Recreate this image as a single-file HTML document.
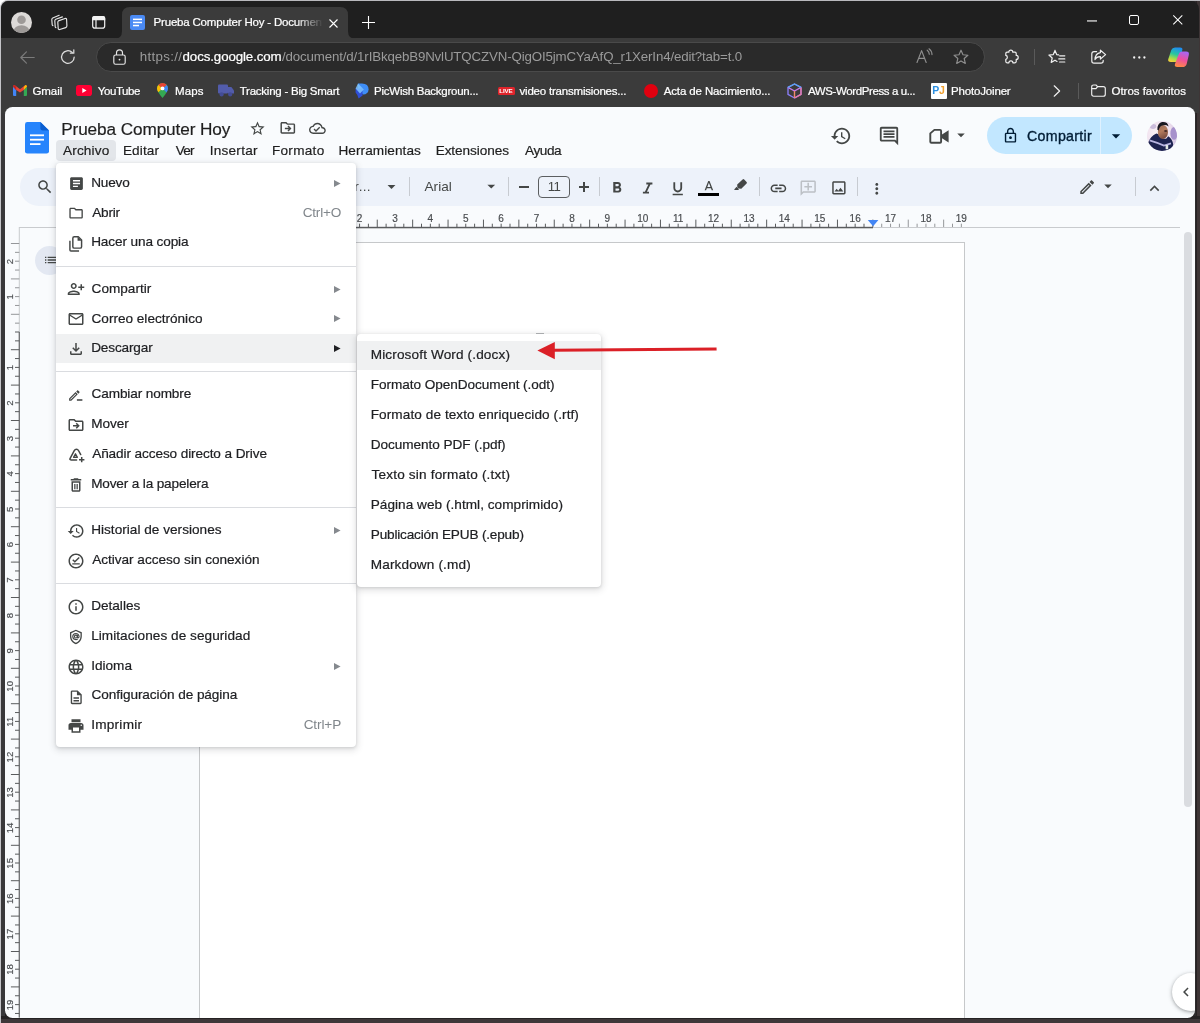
<!DOCTYPE html>
<html lang="es">
<head>
<meta charset="utf-8">
<title>Prueba Computer Hoy - Documentos de Google</title>
<style>
*{box-sizing:border-box;margin:0;padding:0}
html,body{width:1200px;height:1023px;overflow:hidden;background:#fff}
body{font-family:"Liberation Sans",sans-serif;position:relative;color:#1f1f1f}
.abs{position:absolute}
.tx{white-space:nowrap}
.w{-webkit-text-stroke:.22px #fff}
.m{-webkit-text-stroke:.2px #202124}
.g{-webkit-text-stroke:.2px #1f1f1f}
body{will-change:transform}
svg{display:block;overflow:visible}
#winframe{left:0;top:0;width:1200px;height:1023px;background:linear-gradient(90deg,#39383a 0,#39383a 3.6px,#232122 3.6px,#232122 5px,#2e2b2c 5px,#2e2b2c 1195px,#272324 1195px,#272324 1196.3px,#3e3536 1196.3px);border-top-left-radius:8px;border-top:1px solid #b9b9bd;border-left:1px solid #c4c4c8}
#titlebar{left:1px;top:1px;width:1198px;height:38px;background:#1f1f1f;border-radius:8px 8px 0 0}
#navrow{left:1px;top:38px;width:1198px;height:75px;background:#3b3b3b}
#urlpill{left:96px;top:42.1px;width:888.5px;height:29.6px;border-radius:14.8px;background:#2a2a2a;border:1px solid #4a4a4a}
#app{left:4.8px;top:107.4px;width:1190.5px;height:910.4px;background:#f9fbfd;border-radius:7.5px}
#botframe{left:1px;top:1016px;width:1199px;height:7px;background:linear-gradient(180deg,#252223 0,#252223 3px,#3e3739 3px)}
.popup{background:#fff;border-radius:4px;box-shadow:0 2px 6px 2px rgba(60,64,67,.13),0 1px 3px 0 rgba(60,64,67,.17)}
</style>
</head>
<body>

<!-- ===== browser chrome ===== -->
<div class="abs" id="winframe"></div>
<div class="abs" id="botframe"></div>
<div class="abs" id="titlebar"></div>
<div class="abs" id="navrow"></div>
<svg class="abs" style="left:114px;top:7px" width="244" height="32" viewBox="0 0 244 32"><path d="M0 32 Q8 32 8 24 V8 Q8 0 16 0 H226 Q234 0 234 8 V24 Q234 32 242 32 Z" fill="#3b3b3b"/></svg>
<svg class="abs" style="left:10.9px;top:11.7px" width="21" height="21" viewBox="0 0 21 21"><defs><clipPath id="pc"><circle cx="10.5" cy="10.5" r="10.5"/></clipPath></defs><circle cx="10.5" cy="10.5" r="10.5" fill="#dddad8"/><g clip-path="url(#pc)" fill="#9d9997"><circle cx="10.5" cy="7.8" r="4.3"/><ellipse cx="10.5" cy="19.6" rx="8" ry="6.4"/></g></svg>
<svg class="abs" style="left:50px;top:14px" width="18" height="17" viewBox="0 0 18 17" fill="none" stroke="#e6e6e6" stroke-width="1.15" stroke-linejoin="round" stroke-linecap="round"><path d="M8.4 6.9 L15 4.5 Q16.5 4.1 16.6 5.6 L16.9 11.8 Q16.9 13.2 15.7 13.6 L9.7 15.5 Q8.3 15.8 8.2 14.4 L7.8 8.4 Q7.8 7.2 8.4 6.9Z"/><path d="M12.4 2.9 L5.8 5.3 Q4.7 5.8 4.8 7 L5.2 12.6 Q5.3 13.5 6 13.7"/><path d="M9.2 1.3 L2.7 4 Q1.7 4.5 1.8 5.7 L2.2 10.6 Q2.3 11.5 3 11.7"/></svg>
<svg class="abs" style="left:91.6px;top:16px" width="13.4" height="13" viewBox="0 0 13.4 13" fill="none" stroke="#f2f2f2" stroke-width="1.2"><rect x="0.7" y="0.7" width="12" height="11.4" rx="2.2"/><path d="M0.8 2 Q0.8 0.7 2.4 0.7 H11 Q12.6 0.7 12.6 2 V3.6 H0.8Z" fill="#f2f2f2"/><path d="M4 3.6 V12"/></svg>
<svg class="abs" style="left:130px;top:15px" width="15" height="15" viewBox="0 0 15 15"><rect width="15" height="15" rx="2" fill="#4a8af4"/><rect x="3" y="3.6" width="9" height="1.5" fill="#fff"/><rect x="3" y="6.7" width="9" height="1.5" fill="#fff"/><rect x="3" y="9.8" width="6" height="1.5" fill="#fff"/></svg>
<div class="abs" style="left:0;top:0;width:322px;height:38px;overflow:hidden"><span class="abs tx w" style="left:153.60px;top:12.30px;font-size:11.5px;line-height:20px;color:#ffffff;letter-spacing:-0.195px;">Prueba Computer Hoy - Documentos de Google</span></div>
<div class="abs" style="left:296px;top:10px;width:27px;height:26px;background:linear-gradient(90deg,rgba(59,59,59,0),#3b3b3b)"></div>
<svg class="abs" style="left:329px;top:18.5px" width="9" height="9" viewBox="0 0 9 9" stroke="#fff" stroke-width="1.1" fill="none"><path d="M0.5 0.5 L8.5 8.5 M8.5 0.5 L0.5 8.5"/></svg>
<svg class="abs" style="left:361.5px;top:15.5px" width="13" height="13" viewBox="0 0 13 13" stroke="#fff" stroke-width="1.1" fill="none"><path d="M6.5 0 V13 M0 6.5 H13"/></svg>
<svg class="abs" style="left:1087px;top:20px" width="10" height="2" viewBox="0 0 10 2"><rect width="10" height="1.1" y="0.4" fill="#fff"/></svg>
<svg class="abs" style="left:1129px;top:15px" width="10" height="10" viewBox="0 0 10 10" fill="none" stroke="#fff" stroke-width="1"><rect x="0.5" y="0.5" width="9" height="9" rx="1.5"/></svg>
<svg class="abs" style="left:1172.9px;top:14.6px" width="9.6" height="9.6" viewBox="0 0 10 10" stroke="#fff" stroke-width="1.05" fill="none"><path d="M0.3 0.3 L9.7 9.7 M9.7 0.3 L0.3 9.7"/></svg>
<svg class="abs" style="left:19.5px;top:50.5px" width="15" height="13" viewBox="0 0 15 13" stroke="#7b7b7b" stroke-width="1.2" fill="none" stroke-linecap="round" stroke-linejoin="round"><path d="M14.2 6.5 H1 M6.4 0.9 L0.8 6.5 L6.4 12.1"/></svg>
<svg class="abs" style="left:60px;top:49px" width="16" height="16" viewBox="0 0 16 16" stroke="#dcdcdc" stroke-width="1.25" fill="none" stroke-linecap="round" stroke-linejoin="round"><path d="M14.2 8 A6.3 6.3 0 1 1 12.3 3.5"/><path d="M13.8 0.8 V4.2 H10.4"/></svg>
<div class="abs" id="urlpill"></div>
<svg class="abs" style="left:112.5px;top:49px" width="13" height="16" viewBox="0 0 13 16" fill="none" stroke="#e6e6e6" stroke-width="1.15"><rect x="0.8" y="6" width="11.4" height="9.2" rx="1.8"/><path d="M3.5 6 V3.8 A3 3 0 0 1 9.5 3.8 V6"/><circle cx="6.5" cy="10.6" r="0.9" fill="#e6e6e6" stroke="none"/></svg>
<span class="abs tx" style="left:139.67px;top:47.30px;font-size:13.3px;line-height:20px;color:#9b9b9b;letter-spacing:0.338px;">https://</span>
<span class="abs tx w" style="left:182.58px;top:47.30px;font-size:13.3px;line-height:20px;color:#ffffff;letter-spacing:-0.103px;">docs.google.com</span>
<span class="abs tx" style="left:282.00px;top:47.30px;font-size:13.3px;line-height:20px;color:#9b9b9b;letter-spacing:-0.146px;">/document/d/1rIBkqebB9NvlUTQCZVN-QigOI5jmCYaAfQ_r1XerIn4/edit?tab=t.0</span>
<svg class="abs" style="left:916px;top:48px" width="18" height="16" viewBox="0 0 18 16" fill="none" stroke="#8f8f8f" stroke-width="1.15" stroke-linecap="round" stroke-linejoin="round"><path d="M1 14.5 L5.6 2.6 L10.2 14.5 M2.7 10.3 H8.5"/><path d="M11.2 2.2 Q13.2 3.6 13.3 6.2"/><path d="M13 0.8 Q15.9 3 16 6.6"/></svg>
<svg class="abs" style="left:953px;top:49px" width="16" height="16" viewBox="0 0 16 16" fill="none" stroke="#8f8f8f" stroke-width="1.15" stroke-linejoin="round"><path d="M8 1.2 L10 5.7 L14.9 6.2 L11.2 9.5 L12.3 14.4 L8 11.9 L3.7 14.4 L4.8 9.5 L1.1 6.2 L6 5.7Z"/></svg>
<svg class="abs" style="left:1003px;top:49px" width="16" height="16" viewBox="0 0 16 16" fill="none" stroke="#f0f0f0" stroke-width="1.2" stroke-linejoin="round"><path d="M5.8 3.2 A2 2 0 0 1 9.8 3.2 H12 Q13.2 3.2 13.2 4.4 V6.4 A2 2 0 0 1 13.2 10.4 V12.6 Q13.2 13.8 12 13.8 H9.9 A2 2 0 0 0 5.9 13.8 H4 Q2.8 13.8 2.8 12.6 V10.3 A2 2 0 0 0 2.8 6.4 V4.4 Q2.8 3.2 4 3.2Z"/></svg>
<div class="abs" style="left:1033.5px;top:49px;width:1px;height:16px;background:#5a5a5a"></div>
<svg class="abs" style="left:1048px;top:49px" width="18" height="16" viewBox="0 0 18 16" fill="none" stroke="#f0f0f0" stroke-width="1.2" stroke-linejoin="round" stroke-linecap="round"><path d="M7 1.4 L8.7 5.6 L10.6 5.8 M7 1.4 L5.3 5.6 L0.9 6 L4.2 9 L3.2 13.5 L7 11.2 L9 12.4"/><path d="M11.6 6.8 H16.8 M10.8 9.9 H16.8 M11.6 13 H16.8"/></svg>
<svg class="abs" style="left:1090px;top:49px" width="17" height="16" viewBox="0 0 17 16" fill="none" stroke="#f0f0f0" stroke-width="1.2" stroke-linejoin="round" stroke-linecap="round"><path d="M6.6 2.6 H4 Q1.8 2.6 1.8 4.8 V12 Q1.8 14.2 4 14.2 H11 Q13.2 14.2 13.2 12 V11.4"/><path d="M10.4 1.2 L15.6 5.6 L10.4 10 V7.6 Q6.6 7.4 5 10.6 Q5.2 4.4 10.4 3.6Z"/></svg>
<svg class="abs" style="left:1132px;top:55.5px" width="15" height="3" viewBox="0 0 15 3" fill="#f4f4f4"><circle cx="2.2" cy="1.5" r="1.15"/><circle cx="7.3" cy="1.5" r="1.15"/><circle cx="12.4" cy="1.5" r="1.15"/></svg>
<svg class="abs" style="left:1166px;top:46px" width="24" height="22" viewBox="1166 46 24 22"><defs><linearGradient id="cp1" x1="0.6" y1="0" x2="0.3" y2="1"><stop offset="0" stop-color="#1f8df2"/><stop offset=".45" stop-color="#27c6a0"/><stop offset=".75" stop-color="#9edb4c"/><stop offset="1" stop-color="#f6d13a"/></linearGradient><linearGradient id="cp2" x1="0.6" y1="0" x2="0.3" y2="1"><stop offset="0" stop-color="#a866f2"/><stop offset=".5" stop-color="#ee4f9c"/><stop offset="1" stop-color="#ff8a42"/></linearGradient></defs><path d="M1171.3 50 Q1172.2 47.5 1175 47.5 H1180 Q1183.2 47.5 1182.2 50.6 L1179.6 59.2 Q1178.6 62 1175.6 62 H1171 Q1167.4 62 1168.3 59Z" fill="url(#cp1)"/><path d="M1178.4 55 Q1179.4 51.6 1182.4 51.6 H1186 Q1189.6 51.6 1188.8 55 L1186.6 64.2 Q1185.6 67 1182.6 67 H1177.4 Q1174 67 1175 64Z" fill="url(#cp2)"/></svg>
<svg class="abs" style="left:13px;top:85px" width="14" height="11" viewBox="0 0 14 11"><path d="M0 1.6 V10 Q0 11 1 11 H3.2 V5 Z" fill="#4285f4"/><path d="M14 1.6 V10 Q14 11 13 11 H10.8 V5 Z" fill="#34a853"/><path d="M0 1.6 Q0 0 1.6 0 L7 4.2 L12.4 0 Q14 0 14 1.6 L10.8 5 L7 7.6 L3.2 5 Z" fill="#ea4335"/><path d="M10.8 2 L12.4 0 Q14 0 14 1.6 L10.8 5Z" fill="#fbbc04"/><path d="M3.2 2 L1.6 0 Q0 0 0 1.6 L3.2 5Z" fill="#c5221f"/></svg>
<span class="abs tx w" style="left:32.45px;top:80.60px;font-size:11.5px;line-height:20px;color:#ffffff;letter-spacing:-0.056px;">Gmail</span>
<svg class="abs" style="left:76px;top:85px" width="16" height="11" viewBox="0 0 16 11"><rect width="16" height="11" rx="2.8" fill="#ff0033"/><path d="M6.3 3 L10.6 5.5 L6.3 8Z" fill="#fff"/></svg>
<span class="abs tx w" style="left:97.75px;top:80.60px;font-size:11.5px;line-height:20px;color:#ffffff;letter-spacing:-0.408px;">YouTube</span>
<svg class="abs" style="left:157px;top:83px" width="11" height="15" viewBox="0 0 11 15"><path d="M5.5 0 A5.5 5.5 0 0 1 11 5.5 Q11 8.6 5.5 15 Q0 8.6 0 5.5 A5.5 5.5 0 0 1 5.5 0Z" fill="#34a853"/><path d="M5.5 0 A5.5 5.5 0 0 1 9.8 2 L5.5 5.5 L1.2 2 A5.5 5.5 0 0 1 5.5 0Z" fill="#ea4335"/><path d="M9.8 2 A5.5 5.5 0 0 1 11 5.5 Q11 7 9.6 9.4 L5.5 5.5Z" fill="#4285f4"/><path d="M1.2 2 L5.5 5.5 L1.3 9.2 Q0 7 0 5.5 A5.5 5.5 0 0 1 1.2 2Z" fill="#fbbc04"/><circle cx="5.5" cy="5.4" r="1.9" fill="#fff"/></svg>
<span class="abs tx w" style="left:175.10px;top:80.60px;font-size:11.5px;line-height:20px;color:#ffffff;letter-spacing:0.060px;">Maps</span>
<svg class="abs" style="left:218px;top:84px" width="16" height="13" viewBox="0 0 16 13" fill="#525cab"><rect x="0" y="0.5" width="10" height="9" rx="1"/><path d="M10 3 H13.4 L16 6.4 V9.5 H10Z"/><circle cx="3.6" cy="10.4" r="2.1" fill="#434c96"/><circle cx="12.2" cy="10.4" r="2.1" fill="#434c96"/></svg>
<span class="abs tx w" style="left:239.75px;top:80.60px;font-size:11.5px;line-height:20px;color:#ffffff;letter-spacing:-0.241px;">Tracking - Big Smart</span>
<svg class="abs" style="left:355px;top:82.5px" width="14" height="16" viewBox="0 0 14 16"><path d="M3 0.5 H7 Q13.6 0.8 13.6 6.4 Q13.4 11 8 11.6 L3 6.2Z" fill="#3f8ef7"/><path d="M0.6 5.6 L7.4 5.6 L7.6 12.6 L3.6 15.6 Q2.4 11.4 0.6 9.6Z" fill="#2f4fd8"/><path d="M3 0.5 L8.8 6.6 L5 10.4 L0.6 5.6Z" fill="#7fc4ff" opacity=".85"/></svg>
<span class="abs tx w" style="left:374.10px;top:80.60px;font-size:11.5px;line-height:20px;color:#ffffff;letter-spacing:-0.255px;">PicWish Backgroun...</span>
<div class="abs" style="left:498px;top:86.5px;width:16.5px;height:8.5px;border-radius:1.5px;background:#e0242b"></div>
<span class="abs tx" style="left:499.3px;top:86.6px;font-size:6.2px;line-height:8px;color:#fff;font-weight:700;letter-spacing:-.1px">LIVE</span>
<span class="abs tx w" style="left:519.50px;top:80.60px;font-size:11.5px;line-height:20px;color:#ffffff;letter-spacing:-0.199px;">video transmisiones...</span>
<div class="abs" style="left:643.5px;top:83.5px;width:14px;height:14px;border-radius:7px;background:#e1000f"></div>
<span class="abs tx w" style="left:663.70px;top:80.60px;font-size:11.5px;line-height:20px;color:#ffffff;letter-spacing:-0.123px;">Acta de Nacimiento...</span>
<svg class="abs" style="left:786.5px;top:82.5px" width="15" height="16" viewBox="0 0 15 16" fill="none" stroke-width="1.4" stroke-linejoin="round"><path d="M7.5 1 L14 4.4 V11.4 L7.5 15 L1 11.4 V4.4Z" stroke="#8a7df5"/><path d="M1 4.4 L7.5 8 L14 4.4" stroke="#c77bea"/><path d="M7.5 8 V15" stroke="#f08a6a"/><path d="M14 4.4 V11.4 L7.5 15" stroke="#ec7aa8"/><path d="M1 4.4 L7.5 1 L14 4.4" stroke="#5aa5f5"/></svg>
<span class="abs tx w" style="left:808.00px;top:80.60px;font-size:11.5px;line-height:20px;color:#ffffff;letter-spacing:-0.394px;">AWS-WordPress a u...</span>
<div class="abs" style="left:931px;top:82.5px;width:16px;height:16px;background:#fff;border-radius:1px"></div>
<span class="abs tx" style="left:932.3px;top:84.3px;font-size:10.5px;line-height:12px;font-weight:700;color:#2b8fe0;letter-spacing:-.3px">P<span style="color:#f0a030">J</span></span>
<span class="abs tx w" style="left:951.10px;top:80.60px;font-size:11.5px;line-height:20px;color:#ffffff;letter-spacing:-0.179px;">PhotoJoiner</span>
<svg class="abs" style="left:1052.5px;top:84.5px" width="8" height="12" viewBox="0 0 8 12" fill="none" stroke="#f0f0f0" stroke-width="1.2" stroke-linecap="round" stroke-linejoin="round"><path d="M1.2 0.8 L6.6 6 L1.2 11.2"/></svg>
<div class="abs" style="left:1077.5px;top:83px;width:1px;height:16px;background:#5a5a5a"></div>
<svg class="abs" style="left:1091px;top:84px" width="15" height="13" viewBox="0 0 15 13" fill="none" stroke="#f0f0f0" stroke-width="1.15" stroke-linejoin="round"><path d="M0.7 3 Q0.7 1 2.7 1 H5 L6.6 2.6 H12.3 Q14.3 2.6 14.3 4.6 V10.2 Q14.3 12.2 12.3 12.2 H2.7 Q0.7 12.2 0.7 10.2Z"/><path d="M0.7 4.6 H5 L6.6 2.6"/></svg>
<span class="abs tx w" style="left:1111.50px;top:80.60px;font-size:11.5px;line-height:20px;color:#ffffff;letter-spacing:-0.027px;">Otros favoritos</span>
<!-- ===== docs app ===== -->
<div class="abs" id="app"></div>
<svg class="abs" style="left:24.5px;top:122.4px" width="24" height="31.6" viewBox="0 0 24 31.6"><path d="M2.4 0 H15.4 L24 8.6 V29.2 Q24 31.6 21.6 31.6 H2.4 Q0 31.6 0 29.2 V2.4 Q0 0 2.4 0Z" fill="#2684fc"/><path d="M15.4 0 L24 8.6 H17.8 Q15.4 8.6 15.4 6.2Z" fill="#0b5ed0"/><rect x="5" y="12.4" width="14" height="1.8" fill="#fff"/><rect x="5" y="16.8" width="14" height="1.8" fill="#fff"/><rect x="5" y="21.2" width="10.5" height="1.8" fill="#fff"/></svg>
<span class="abs tx g" style="left:61.16px;top:116.70px;font-size:17.2px;line-height:24px;color:#1f1f1f;letter-spacing:-0.099px;">Prueba Computer Hoy</span>
<svg class="abs" style="left:248.70px;top:119.60px;" width="17" height="17" viewBox="0 0 24 24" fill="#444746"><path d="M22 9.24l-7.19-.62L12 2 9.19 8.63 2 9.24l5.46 4.73L5.82 21 12 17.27 18.18 21l-1.63-7.03L22 9.24zM12 15.4l-3.76 2.27 1-4.28-3.32-2.88 4.38-.38L12 6.1l1.71 4.04 4.38.38-3.32 2.88 1 4.28L12 15.4z" /></svg>
<svg class="abs" style="left:278.70px;top:119.40px;" width="17.6" height="17.6" viewBox="0 0 24 24" fill="#444746"><path d="M20 6h-8l-2-2H4c-1.1 0-2 .9-2 2v12c0 1.1.9 2 2 2h16c1.1 0 2-.9 2-2V8c0-1.1-.9-2-2-2zm0 12H4V6h5.17l2 2H20v10z" /><path d="M8 12h5.2l-1.6-1.6L13 9l4 4-4 4-1.4-1.4 1.6-1.6H8z" /></svg>
<svg class="abs" style="left:309.00px;top:120.00px;" width="16.8" height="16.8" viewBox="0 0 24 24" fill="#444746"><path d="M19.35 10.04C18.67 6.59 15.64 4 12 4 9.11 4 6.6 5.64 5.35 8.04 2.34 8.36 0 10.91 0 14c0 3.31 2.69 6 6 6h13c2.76 0 5-2.24 5-5 0-2.64-2.05-4.78-4.65-4.96zM19 18H6c-2.21 0-4-1.79-4-4 0-2.05 1.53-3.76 3.56-3.97l1.07-.11.5-.95C8.08 7.14 9.94 6 12 6c2.62 0 4.88 1.86 5.39 4.43l.3 1.5 1.53.11c1.56.1 2.78 1.41 2.78 2.96 0 1.65-1.35 3-3 3zm-9-3.82l-2.09-2.09L6.5 13.5 10 17l6.01-6.01-1.41-1.41z" /></svg>
<div class="abs" style="left:55.5px;top:139.7px;width:60px;height:21.8px;border-radius:4px;background:#e3e6ea"></div>
<span class="abs tx g" style="left:63.00px;top:141.40px;font-size:13.6px;line-height:20px;color:#1f1f1f;letter-spacing:0.150px;">Archivo</span>
<span class="abs tx g" style="left:122.94px;top:141.40px;font-size:13.6px;line-height:20px;color:#1f1f1f;letter-spacing:0.120px;">Editar</span>
<span class="abs tx g" style="left:175.70px;top:141.40px;font-size:13.6px;line-height:20px;color:#1f1f1f;letter-spacing:-0.773px;">Ver</span>
<span class="abs tx g" style="left:209.64px;top:141.40px;font-size:13.6px;line-height:20px;color:#1f1f1f;letter-spacing:0.260px;">Insertar</span>
<span class="abs tx g" style="left:271.94px;top:141.40px;font-size:13.6px;line-height:20px;color:#1f1f1f;letter-spacing:0.280px;">Formato</span>
<span class="abs tx g" style="left:338.44px;top:141.40px;font-size:13.6px;line-height:20px;color:#1f1f1f;letter-spacing:0.078px;">Herramientas</span>
<span class="abs tx g" style="left:435.64px;top:141.40px;font-size:13.6px;line-height:20px;color:#1f1f1f;letter-spacing:-0.060px;">Extensiones</span>
<span class="abs tx g" style="left:525.00px;top:141.40px;font-size:13.6px;line-height:20px;color:#1f1f1f;letter-spacing:-0.426px;">Ayuda</span>
<svg class="abs" style="left:830.30px;top:124.90px;" width="22" height="22" viewBox="0 0 24 24" fill="#444746"><path d="M13 3c-4.97 0-9 4.03-9 9H1l3.89 3.89.07.14L9 12H6c0-3.87 3.13-7 7-7s7 3.13 7 7-3.13 7-7 7c-1.93 0-3.68-.79-4.94-2.06l-1.42 1.42C8.27 19.99 10.51 21 13 21c4.97 0 9-4.03 9-9s-4.03-9-9-9zm-1 5v5l4.28 2.54.72-1.21-3.5-2.08V8H12z" /></svg>
<svg class="abs" style="left:877.50px;top:125.10px;" width="22" height="22" viewBox="0 0 24 24" fill="#444746"><path d="M21.99 4c0-1.1-.89-2-1.99-2H4c-1.1 0-2 .9-2 2v12c0 1.1.9 2 2 2h14l4 4-.01-18zM20 4v13.170000000000002L18.83 16H4V4h16zM6 12h12v2H6zm0-3h12v2H6zm0-3h12v2H6z" /></svg>
<svg class="abs" style="left:927px;top:126px" width="24" height="20" viewBox="927 126 24 20"><path d="M930.3 133.4 L934.4 129.9 H940 Q941.1 129.9 941.1 131 V141.7 Q941.1 142.8 940 142.8 H931.4 Q930.3 142.8 930.3 141.7Z" fill="none" stroke="#444746" stroke-width="1.9" stroke-linejoin="round"/><path d="M942 134.6 L948.6 130.2 V142.6 L942 138.2Z" fill="#444746"/></svg>
<svg class="abs" style="left:952.30px;top:126.30px;" width="18" height="18" viewBox="0 0 24 24" fill="#444746"><path d="M7 10l5 5 5-5z" /></svg>
<div class="abs" style="left:986.6px;top:117px;width:145.3px;height:37px;border-radius:18.5px;background:#c2e7ff"></div>
<div class="abs" style="left:1099.6px;top:117px;width:1px;height:37px;background:#dff1ff"></div>
<svg class="abs" style="left:1002.20px;top:127.20px;" width="17" height="17" viewBox="0 0 24 24" fill="#001d35"><path d="M18 8h-1V6c0-2.76-2.24-5-5-5S7 3.24 7 6v2H6c-1.1 0-2 .9-2 2v10c0 1.1.9 2 2 2h12c1.1 0 2-.9 2-2V10c0-1.1-.9-2-2-2zM9 6c0-1.66 1.34-3 3-3s3 1.34 3 3v2H9V6zm9 14H6V10h12v10zm-6-3c1.1 0 2-.9 2-2s-.9-2-2-2-2 .9-2 2 .9 2 2 2z" /></svg>
<span class="abs tx" style="left:1027.03px;top:125.80px;font-size:14.2px;line-height:20px;color:#001d35;letter-spacing:0.313px;-webkit-text-stroke:.35px #001d35;">Compartir</span>
<svg class="abs" style="left:1105.50px;top:126.00px;" width="20" height="20" viewBox="0 0 24 24" fill="#001d35"><path d="M7 10l5 5 5-5z" /></svg>
<svg class="abs" style="left:1146.9px;top:120.5px" width="30" height="30" viewBox="0 0 30 30"><defs><clipPath id="av"><circle cx="15" cy="15" r="15"/></clipPath><radialGradient id="avg" cx=".35" cy=".4" r=".75"><stop offset="0" stop-color="#fbf3f6"/><stop offset=".6" stop-color="#efe0ee"/><stop offset="1" stop-color="#cdbfe0"/></radialGradient><linearGradient id="avf" x1="0" y1="0" x2=".4" y2="1"><stop offset="0" stop-color="#9a6a58"/><stop offset=".5" stop-color="#b47c5e"/><stop offset="1" stop-color="#7c4e40"/></linearGradient></defs><g clip-path="url(#av)"><rect width="30" height="30" fill="url(#avg)"/><ellipse cx="27" cy="12.4" rx="3.6" ry="6.4" fill="#a792cc"/><ellipse cx="6" cy="5.5" rx="3.2" ry="2.4" fill="#b9a9d2" opacity=".7"/><path d="M1.2 21.5 Q3.6 14.6 9.4 12.4 L12.4 13.6 Q14.6 19 19.4 17.4 L21.2 15.2 Q25.6 18 26.2 23.6 L24 31 H1Z" fill="#1d2350"/><ellipse cx="15.9" cy="11" rx="5.1" ry="7" fill="url(#avf)"/><path d="M10.4 8.8 Q10 2.4 15 1 Q20.6 0.4 21.6 5.4 Q19 3.6 16.4 4.2 Q12.4 4.8 11.6 9.4Z" fill="#1a1820"/><ellipse cx="18.7" cy="10" rx="1.7" ry=".7" fill="#2a1718"/><path d="M2.6 19.4 Q10 21.6 17 24.6 L24 22.4" fill="none" stroke="#b8b4e0" stroke-width="1.7"/><rect x="18.6" y="24" width="2.6" height="4.2" rx=".5" fill="#e2e8e6"/></g></svg>
<div class="abs" style="left:20px;top:168.3px;width:1160.3px;height:37.6px;border-radius:18.8px;background:#edf2fa"></div>
<svg class="abs" style="left:36.10px;top:178.20px;" width="17.8" height="17.8" viewBox="0 0 24 24" fill="#444746"><path d="M15.5 14h-.79l-.28-.27C15.41 12.59 16 11.11 16 9.5 16 5.91 13.09 3 9.5 3S3 5.91 3 9.5 5.91 16 9.5 16c1.61 0 3.09-.59 4.23-1.57l.27.28v.79l5 4.99L20.49 19l-4.99-5zm-6 0C7.01 14 5 11.99 5 9.5S7.01 5 9.5 5 14 7.01 14 9.5 11.99 14 9.5 14z" /></svg>
<span class="abs tx" style="left:354.35px;top:177.40px;font-size:13.6px;line-height:20px;color:#444746;">r</span>
<span class="abs tx" style="left:358.84px;top:177.40px;font-size:13.6px;line-height:20px;color:#444746;letter-spacing:0.178px;">...</span>
<svg class="abs" style="left:381.70px;top:177.10px;" width="19" height="19" viewBox="0 0 24 24" fill="#444746"><path d="M7 10l5 5 5-5z" /></svg>
<div class="abs" style="left:408.5px;top:177.3px;width:1px;height:19px;background:#c7cbd1"></div>
<div class="abs" style="left:508.2px;top:177.3px;width:1px;height:19px;background:#c7cbd1"></div>
<div class="abs" style="left:599.0px;top:177.3px;width:1px;height:19px;background:#c7cbd1"></div>
<div class="abs" style="left:759.0px;top:177.3px;width:1px;height:19px;background:#c7cbd1"></div>
<div class="abs" style="left:857.0px;top:177.3px;width:1px;height:19px;background:#c7cbd1"></div>
<div class="abs" style="left:1135.0px;top:177.3px;width:1px;height:19px;background:#c7cbd1"></div>
<span class="abs tx" style="left:424.50px;top:177.40px;font-size:13.6px;line-height:20px;color:#444746;letter-spacing:0.047px;">Arial</span>
<svg class="abs" style="left:481.55px;top:177.45px;" width="18.5" height="18.5" viewBox="0 0 24 24" fill="#444746"><path d="M7 10l5 5 5-5z" /></svg>
<div class="abs" style="left:519.4px;top:186.3px;width:9.8px;height:1.6px;background:#444746"></div>
<div class="abs" style="left:538.2px;top:176.3px;width:31.7px;height:22px;border:1px solid #5b5e60;border-radius:4px"></div>
<span class="abs tx" style="left:547.77px;top:177.40px;font-size:13.2px;line-height:20px;color:#444746;letter-spacing:-0.543px;">11</span>
<div class="abs" style="left:579.3px;top:186.4px;width:9.8px;height:1.6px;background:#444746"></div>
<div class="abs" style="left:583.4px;top:182.3px;width:1.6px;height:9.8px;background:#444746"></div>
<svg class="abs" style="left:608.40px;top:179.20px;" width="18" height="18" viewBox="0 0 24 24" fill="#444746"><path d="M15.6 10.79c.97-.67 1.65-1.77 1.65-2.79 0-2.26-1.75-4-4-4H7v14h7.04c2.09 0 3.71-1.7 3.71-3.79 0-1.52-.86-2.82-2.15-3.42zM10 6.5h3c.83 0 1.5.67 1.5 1.5s-.67 1.5-1.5 1.5h-3v-3zm3.5 9H10v-3h3.5c.83 0 1.5.67 1.5 1.5s-.67 1.5-1.5 1.5z" /></svg>
<svg class="abs" style="left:641px;top:181px" width="14" height="14" viewBox="641 181 14 14" fill="none" stroke="#444746" stroke-width="1.8"><path d="M646.3 183.5 H652.4 M642.9 192.6 H649 M649.9 183.5 L645.5 192.6"/></svg>
<svg class="abs" style="left:669.05px;top:179.55px;" width="17.5" height="17.5" viewBox="0 0 24 24" fill="#444746"><path d="M12 17c3.31 0 6-2.69 6-6V3h-2.5v8c0 1.93-1.57 3.5-3.5 3.5S8.500000000000002 12.93 8.500000000000002 11V3H6v8c0 3.31 2.69 6 6 6zm-7 2v2h14v-2H5z" /></svg>
<svg class="abs" style="left:701.10px;top:178.70px;" width="15.8" height="15.8" viewBox="0 0 24 24" fill="#444746"><path d="M11 3L5.5 17h2.25l1.12-3h6.25l1.12 3h2.25L13 3h-2zm-1.38 9L12 5.67 14.38 12H9.62z" /></svg>
<div class="abs" style="left:698px;top:192.7px;width:21px;height:3.6px;background:#000"></div>
<svg class="abs" style="left:733px;top:178px" width="15" height="13" viewBox="733 178 15 13" fill="#444746"><path d="M737.2 184.6 L742.6 179.4 Q743.4 178.7 744.2 179.5 L746.6 181.9 Q747.3 182.7 746.6 183.5 L741.3 188.8 L738.6 188.6 L737.3 187.2Z"/><path d="M736.6 186.8 L739 189.2 L738.2 190 H734.2 L734.6 188.9Z"/></svg>
<svg class="abs" style="left:768.50px;top:178.60px;" width="18.8" height="18.8" viewBox="0 0 24 24" fill="#444746"><path d="M3.9 12c0-1.71 1.39-3.1 3.1-3.1h4V7H7c-2.76 0-5 2.24-5 5s2.24 5 5 5h4v-1.9H7c-1.71 0-3.1-1.39-3.1-3.1zM8 13h8v-2H8v2zm9-6h-4v1.9h4c1.71 0 3.1 1.39 3.1 3.1s-1.39 3.1-3.1 3.1h-4V17h4c2.76 0 5-2.24 5-5s-2.24-5-5-5z" /></svg>
<svg class="abs" style="left:798.50px;top:178.60px;" width="18.4" height="18.4" viewBox="0 0 24 24" fill="#bcc0c5"><path d="M2 4c0-1.1.9-2 2-2h16c1.1 0 2 .9 2 2v12c0 1.1-.9 2-2 2H6l-4 4V4zm2 13.17L5.17 16H20V4H4v13.17zM11 5h2v4h4v2h-4v4h-2v-4H7V9h4z" /></svg>
<svg class="abs" style="left:829.80px;top:179.20px;" width="17.8" height="17.8" viewBox="0 0 24 24" fill="#444746"><path d="M19 5v14H5V5h14m0-2H5c-1.1 0-2 .9-2 2v14c0 1.1.9 2 2 2h14c1.1 0 2-.9 2-2V5c0-1.1-.9-2-2-2zm-4.86 8.86l-3 3.87L9 13.14 6 17h12l-3.86-5.140000000000001z" /></svg>
<svg class="abs" style="left:868.40px;top:179.50px;" width="17.6" height="17.6" viewBox="0 0 24 24" fill="#444746"><path d="M12 8c1.1 0 2-.9 2-2s-.9-2-2-2-2 .9-2 2 .9 2 2 2zm0 2c-1.1 0-2 .9-2 2s.9 2 2 2 2-.9 2-2-.9-2-2-2zm0 6c-1.1 0-2 .9-2 2s.9 2 2 2 2-.9 2-2-.9-2-2-2z" /></svg>
<svg class="abs" style="left:1078.35px;top:178.15px;" width="18.3" height="18.3" viewBox="0 0 24 24" fill="#444746"><path d="M14.06 9.02l.92.92L5.92 19H5v-.92l9.06-9.06M17.66 3c-.25 0-.51.1-.7.29l-1.83 1.83 3.75 3.75 1.83-1.83c.39-.39.39-1.02 0-1.41l-2.34-2.34c-.2-.2-.45-.29-.71-.29zm-3.6 3.19L3 17.25V21h3.75L17.81 9.94l-3.75-3.75z" /></svg>
<svg class="abs" style="left:1098.50px;top:177.30px;" width="18" height="18" viewBox="0 0 24 24" fill="#444746"><path d="M7 10l5 5 5-5z" /></svg>
<svg class="abs" style="left:1144.50px;top:178.90px;" width="19" height="19" viewBox="0 0 24 24" fill="#444746"><path d="M12 8l-6 6 1.41 1.41L12 10.83l4.59 4.58L18 14z" /></svg>
<svg class="abs" style="left:0;top:0;pointer-events:none" width="1200" height="1023" viewBox="0 0 1200 1023" shape-rendering="auto">
<rect x="19" y="227" width="1161" height="1" fill="#c9cbce"/>
<rect x="288.75" y="226.8" width="584.25" height="1.5" fill="#5a5c5e"/>
<rect x="199.75" y="219.60" width="1" height="7.40" fill="#95979a"/>
<rect x="208.60" y="223.70" width="1" height="3.30" fill="#95979a"/>
<rect x="217.45" y="223.70" width="1" height="3.30" fill="#95979a"/>
<rect x="226.30" y="223.70" width="1" height="3.30" fill="#95979a"/>
<rect x="235.15" y="219.60" width="1" height="7.40" fill="#95979a"/>
<rect x="244.00" y="223.70" width="1" height="3.30" fill="#95979a"/>
<rect x="252.85" y="223.70" width="1" height="3.30" fill="#95979a"/>
<rect x="261.70" y="223.70" width="1" height="3.30" fill="#95979a"/>
<rect x="270.55" y="219.60" width="1" height="7.40" fill="#95979a"/>
<rect x="279.40" y="223.70" width="1" height="3.30" fill="#95979a"/>
<rect x="288.25" y="223.70" width="1" height="3.30" fill="#5a5c5e"/>
<rect x="297.10" y="223.70" width="1" height="3.30" fill="#5a5c5e"/>
<rect x="305.95" y="219.60" width="1" height="7.40" fill="#5a5c5e"/>
<rect x="314.80" y="223.70" width="1" height="3.30" fill="#5a5c5e"/>
<rect x="323.65" y="223.70" width="1" height="3.30" fill="#5a5c5e"/>
<rect x="332.50" y="223.70" width="1" height="3.30" fill="#5a5c5e"/>
<rect x="341.35" y="219.60" width="1" height="7.40" fill="#5a5c5e"/>
<rect x="350.20" y="223.70" width="1" height="3.30" fill="#5a5c5e"/>
<rect x="359.05" y="223.70" width="1" height="3.30" fill="#5a5c5e"/>
<rect x="367.90" y="223.70" width="1" height="3.30" fill="#5a5c5e"/>
<rect x="376.75" y="219.60" width="1" height="7.40" fill="#5a5c5e"/>
<rect x="385.60" y="223.70" width="1" height="3.30" fill="#5a5c5e"/>
<rect x="394.45" y="223.70" width="1" height="3.30" fill="#5a5c5e"/>
<rect x="403.30" y="223.70" width="1" height="3.30" fill="#5a5c5e"/>
<rect x="412.15" y="219.60" width="1" height="7.40" fill="#5a5c5e"/>
<rect x="421.00" y="223.70" width="1" height="3.30" fill="#5a5c5e"/>
<rect x="429.85" y="223.70" width="1" height="3.30" fill="#5a5c5e"/>
<rect x="438.70" y="223.70" width="1" height="3.30" fill="#5a5c5e"/>
<rect x="447.55" y="219.60" width="1" height="7.40" fill="#5a5c5e"/>
<rect x="456.40" y="223.70" width="1" height="3.30" fill="#5a5c5e"/>
<rect x="465.25" y="223.70" width="1" height="3.30" fill="#5a5c5e"/>
<rect x="474.10" y="223.70" width="1" height="3.30" fill="#5a5c5e"/>
<rect x="482.95" y="219.60" width="1" height="7.40" fill="#5a5c5e"/>
<rect x="491.80" y="223.70" width="1" height="3.30" fill="#5a5c5e"/>
<rect x="500.65" y="223.70" width="1" height="3.30" fill="#5a5c5e"/>
<rect x="509.50" y="223.70" width="1" height="3.30" fill="#5a5c5e"/>
<rect x="518.35" y="219.60" width="1" height="7.40" fill="#5a5c5e"/>
<rect x="527.20" y="223.70" width="1" height="3.30" fill="#5a5c5e"/>
<rect x="536.05" y="223.70" width="1" height="3.30" fill="#5a5c5e"/>
<rect x="544.90" y="223.70" width="1" height="3.30" fill="#5a5c5e"/>
<rect x="553.75" y="219.60" width="1" height="7.40" fill="#5a5c5e"/>
<rect x="562.60" y="223.70" width="1" height="3.30" fill="#5a5c5e"/>
<rect x="571.45" y="223.70" width="1" height="3.30" fill="#5a5c5e"/>
<rect x="580.30" y="223.70" width="1" height="3.30" fill="#5a5c5e"/>
<rect x="589.15" y="219.60" width="1" height="7.40" fill="#5a5c5e"/>
<rect x="598.00" y="223.70" width="1" height="3.30" fill="#5a5c5e"/>
<rect x="606.85" y="223.70" width="1" height="3.30" fill="#5a5c5e"/>
<rect x="615.70" y="223.70" width="1" height="3.30" fill="#5a5c5e"/>
<rect x="624.55" y="219.60" width="1" height="7.40" fill="#5a5c5e"/>
<rect x="633.40" y="223.70" width="1" height="3.30" fill="#5a5c5e"/>
<rect x="642.25" y="223.70" width="1" height="3.30" fill="#5a5c5e"/>
<rect x="651.10" y="223.70" width="1" height="3.30" fill="#5a5c5e"/>
<rect x="659.95" y="219.60" width="1" height="7.40" fill="#5a5c5e"/>
<rect x="668.80" y="223.70" width="1" height="3.30" fill="#5a5c5e"/>
<rect x="677.65" y="223.70" width="1" height="3.30" fill="#5a5c5e"/>
<rect x="686.50" y="223.70" width="1" height="3.30" fill="#5a5c5e"/>
<rect x="695.35" y="219.60" width="1" height="7.40" fill="#5a5c5e"/>
<rect x="704.20" y="223.70" width="1" height="3.30" fill="#5a5c5e"/>
<rect x="713.05" y="223.70" width="1" height="3.30" fill="#5a5c5e"/>
<rect x="721.90" y="223.70" width="1" height="3.30" fill="#5a5c5e"/>
<rect x="730.75" y="219.60" width="1" height="7.40" fill="#5a5c5e"/>
<rect x="739.60" y="223.70" width="1" height="3.30" fill="#5a5c5e"/>
<rect x="748.45" y="223.70" width="1" height="3.30" fill="#5a5c5e"/>
<rect x="757.30" y="223.70" width="1" height="3.30" fill="#5a5c5e"/>
<rect x="766.15" y="219.60" width="1" height="7.40" fill="#5a5c5e"/>
<rect x="775.00" y="223.70" width="1" height="3.30" fill="#5a5c5e"/>
<rect x="783.85" y="223.70" width="1" height="3.30" fill="#5a5c5e"/>
<rect x="792.70" y="223.70" width="1" height="3.30" fill="#5a5c5e"/>
<rect x="801.55" y="219.60" width="1" height="7.40" fill="#5a5c5e"/>
<rect x="810.40" y="223.70" width="1" height="3.30" fill="#5a5c5e"/>
<rect x="819.25" y="223.70" width="1" height="3.30" fill="#5a5c5e"/>
<rect x="828.10" y="223.70" width="1" height="3.30" fill="#5a5c5e"/>
<rect x="836.95" y="219.60" width="1" height="7.40" fill="#5a5c5e"/>
<rect x="845.80" y="223.70" width="1" height="3.30" fill="#5a5c5e"/>
<rect x="854.65" y="223.70" width="1" height="3.30" fill="#5a5c5e"/>
<rect x="863.50" y="223.70" width="1" height="3.30" fill="#5a5c5e"/>
<rect x="872.35" y="219.60" width="1" height="7.40" fill="#5a5c5e"/>
<rect x="881.20" y="223.70" width="1" height="3.30" fill="#95979a"/>
<rect x="890.05" y="223.70" width="1" height="3.30" fill="#95979a"/>
<rect x="898.90" y="223.70" width="1" height="3.30" fill="#95979a"/>
<rect x="907.75" y="219.60" width="1" height="7.40" fill="#95979a"/>
<rect x="916.60" y="223.70" width="1" height="3.30" fill="#95979a"/>
<rect x="925.45" y="223.70" width="1" height="3.30" fill="#95979a"/>
<rect x="934.30" y="223.70" width="1" height="3.30" fill="#95979a"/>
<rect x="943.15" y="219.60" width="1" height="7.40" fill="#95979a"/>
<rect x="952.00" y="223.70" width="1" height="3.30" fill="#95979a"/>
<rect x="960.85" y="223.70" width="1" height="3.30" fill="#95979a"/>
<rect x="18.8" y="227" width="1" height="790.5" fill="#c9cbce"/>
<rect x="18.7" y="332.00" width="1.2" height="685.60" fill="#6a6c6e"/>
<rect x="10.90" y="243.00" width="8.40" height="1" fill="#95979a"/>
<rect x="15.00" y="251.85" width="4.30" height="1" fill="#95979a"/>
<rect x="15.00" y="260.70" width="4.30" height="1" fill="#95979a"/>
<rect x="15.00" y="269.55" width="4.30" height="1" fill="#95979a"/>
<rect x="10.90" y="278.40" width="8.40" height="1" fill="#95979a"/>
<rect x="15.00" y="287.25" width="4.30" height="1" fill="#95979a"/>
<rect x="15.00" y="296.10" width="4.30" height="1" fill="#95979a"/>
<rect x="15.00" y="304.95" width="4.30" height="1" fill="#95979a"/>
<rect x="10.90" y="313.80" width="8.40" height="1" fill="#95979a"/>
<rect x="15.00" y="322.65" width="4.30" height="1" fill="#95979a"/>
<rect x="15.00" y="331.50" width="4.30" height="1" fill="#5a5c5e"/>
<rect x="15.00" y="340.35" width="4.30" height="1" fill="#5a5c5e"/>
<rect x="10.90" y="349.20" width="8.40" height="1" fill="#5a5c5e"/>
<rect x="15.00" y="358.05" width="4.30" height="1" fill="#5a5c5e"/>
<rect x="15.00" y="366.90" width="4.30" height="1" fill="#5a5c5e"/>
<rect x="15.00" y="375.75" width="4.30" height="1" fill="#5a5c5e"/>
<rect x="10.90" y="384.60" width="8.40" height="1" fill="#5a5c5e"/>
<rect x="15.00" y="393.45" width="4.30" height="1" fill="#5a5c5e"/>
<rect x="15.00" y="402.30" width="4.30" height="1" fill="#5a5c5e"/>
<rect x="15.00" y="411.15" width="4.30" height="1" fill="#5a5c5e"/>
<rect x="10.90" y="420.00" width="8.40" height="1" fill="#5a5c5e"/>
<rect x="15.00" y="428.85" width="4.30" height="1" fill="#5a5c5e"/>
<rect x="15.00" y="437.70" width="4.30" height="1" fill="#5a5c5e"/>
<rect x="15.00" y="446.55" width="4.30" height="1" fill="#5a5c5e"/>
<rect x="10.90" y="455.40" width="8.40" height="1" fill="#5a5c5e"/>
<rect x="15.00" y="464.25" width="4.30" height="1" fill="#5a5c5e"/>
<rect x="15.00" y="473.10" width="4.30" height="1" fill="#5a5c5e"/>
<rect x="15.00" y="481.95" width="4.30" height="1" fill="#5a5c5e"/>
<rect x="10.90" y="490.80" width="8.40" height="1" fill="#5a5c5e"/>
<rect x="15.00" y="499.65" width="4.30" height="1" fill="#5a5c5e"/>
<rect x="15.00" y="508.50" width="4.30" height="1" fill="#5a5c5e"/>
<rect x="15.00" y="517.35" width="4.30" height="1" fill="#5a5c5e"/>
<rect x="10.90" y="526.20" width="8.40" height="1" fill="#5a5c5e"/>
<rect x="15.00" y="535.05" width="4.30" height="1" fill="#5a5c5e"/>
<rect x="15.00" y="543.90" width="4.30" height="1" fill="#5a5c5e"/>
<rect x="15.00" y="552.75" width="4.30" height="1" fill="#5a5c5e"/>
<rect x="10.90" y="561.60" width="8.40" height="1" fill="#5a5c5e"/>
<rect x="15.00" y="570.45" width="4.30" height="1" fill="#5a5c5e"/>
<rect x="15.00" y="579.30" width="4.30" height="1" fill="#5a5c5e"/>
<rect x="15.00" y="588.15" width="4.30" height="1" fill="#5a5c5e"/>
<rect x="10.90" y="597.00" width="8.40" height="1" fill="#5a5c5e"/>
<rect x="15.00" y="605.85" width="4.30" height="1" fill="#5a5c5e"/>
<rect x="15.00" y="614.70" width="4.30" height="1" fill="#5a5c5e"/>
<rect x="15.00" y="623.55" width="4.30" height="1" fill="#5a5c5e"/>
<rect x="10.90" y="632.40" width="8.40" height="1" fill="#5a5c5e"/>
<rect x="15.00" y="641.25" width="4.30" height="1" fill="#5a5c5e"/>
<rect x="15.00" y="650.10" width="4.30" height="1" fill="#5a5c5e"/>
<rect x="15.00" y="658.95" width="4.30" height="1" fill="#5a5c5e"/>
<rect x="10.90" y="667.80" width="8.40" height="1" fill="#5a5c5e"/>
<rect x="15.00" y="676.65" width="4.30" height="1" fill="#5a5c5e"/>
<rect x="15.00" y="685.50" width="4.30" height="1" fill="#5a5c5e"/>
<rect x="15.00" y="694.35" width="4.30" height="1" fill="#5a5c5e"/>
<rect x="10.90" y="703.20" width="8.40" height="1" fill="#5a5c5e"/>
<rect x="15.00" y="712.05" width="4.30" height="1" fill="#5a5c5e"/>
<rect x="15.00" y="720.90" width="4.30" height="1" fill="#5a5c5e"/>
<rect x="15.00" y="729.75" width="4.30" height="1" fill="#5a5c5e"/>
<rect x="10.90" y="738.60" width="8.40" height="1" fill="#5a5c5e"/>
<rect x="15.00" y="747.45" width="4.30" height="1" fill="#5a5c5e"/>
<rect x="15.00" y="756.30" width="4.30" height="1" fill="#5a5c5e"/>
<rect x="15.00" y="765.15" width="4.30" height="1" fill="#5a5c5e"/>
<rect x="10.90" y="774.00" width="8.40" height="1" fill="#5a5c5e"/>
<rect x="15.00" y="782.85" width="4.30" height="1" fill="#5a5c5e"/>
<rect x="15.00" y="791.70" width="4.30" height="1" fill="#5a5c5e"/>
<rect x="15.00" y="800.55" width="4.30" height="1" fill="#5a5c5e"/>
<rect x="10.90" y="809.40" width="8.40" height="1" fill="#5a5c5e"/>
<rect x="15.00" y="818.25" width="4.30" height="1" fill="#5a5c5e"/>
<rect x="15.00" y="827.10" width="4.30" height="1" fill="#5a5c5e"/>
<rect x="15.00" y="835.95" width="4.30" height="1" fill="#5a5c5e"/>
<rect x="10.90" y="844.80" width="8.40" height="1" fill="#5a5c5e"/>
<rect x="15.00" y="853.65" width="4.30" height="1" fill="#5a5c5e"/>
<rect x="15.00" y="862.50" width="4.30" height="1" fill="#5a5c5e"/>
<rect x="15.00" y="871.35" width="4.30" height="1" fill="#5a5c5e"/>
<rect x="10.90" y="880.20" width="8.40" height="1" fill="#5a5c5e"/>
<rect x="15.00" y="889.05" width="4.30" height="1" fill="#5a5c5e"/>
<rect x="15.00" y="897.90" width="4.30" height="1" fill="#5a5c5e"/>
<rect x="15.00" y="906.75" width="4.30" height="1" fill="#5a5c5e"/>
<rect x="10.90" y="915.60" width="8.40" height="1" fill="#5a5c5e"/>
<rect x="15.00" y="924.45" width="4.30" height="1" fill="#5a5c5e"/>
<rect x="15.00" y="933.30" width="4.30" height="1" fill="#5a5c5e"/>
<rect x="15.00" y="942.15" width="4.30" height="1" fill="#5a5c5e"/>
<rect x="10.90" y="951.00" width="8.40" height="1" fill="#5a5c5e"/>
<rect x="15.00" y="959.85" width="4.30" height="1" fill="#5a5c5e"/>
<rect x="15.00" y="968.70" width="4.30" height="1" fill="#5a5c5e"/>
<rect x="15.00" y="977.55" width="4.30" height="1" fill="#5a5c5e"/>
<rect x="10.90" y="986.40" width="8.40" height="1" fill="#5a5c5e"/>
<rect x="15.00" y="995.25" width="4.30" height="1" fill="#5a5c5e"/>
<rect x="15.00" y="1004.10" width="4.30" height="1" fill="#5a5c5e"/>
<rect x="15.00" y="1012.95" width="4.30" height="1" fill="#5a5c5e"/>
<g font-family="Liberation Sans, sans-serif" font-size="10" fill="#4a4d50" stroke="#4a4d50" stroke-width=".18" text-anchor="middle">
<text x="359.55" y="221.9">2</text>
<text x="394.95" y="221.9">3</text>
<text x="430.35" y="221.9">4</text>
<text x="465.75" y="221.9">5</text>
<text x="501.15" y="221.9">6</text>
<text x="536.55" y="221.9">7</text>
<text x="571.95" y="221.9">8</text>
<text x="607.35" y="221.9">9</text>
<text x="642.75" y="221.9">10</text>
<text x="678.15" y="221.9">11</text>
<text x="713.55" y="221.9">12</text>
<text x="748.95" y="221.9">13</text>
<text x="784.35" y="221.9">14</text>
<text x="819.75" y="221.9">15</text>
<text x="855.15" y="221.9">16</text>
<text x="890.55" y="221.9">17</text>
<text x="925.95" y="221.9">18</text>
<text x="961.35" y="221.9">19</text>
<text font-size="9.6" transform="translate(12.9,261.50) rotate(-90)">2</text>
<text font-size="9.6" transform="translate(12.9,296.90) rotate(-90)">1</text>
<text font-size="9.6" transform="translate(12.9,367.70) rotate(-90)">1</text>
<text font-size="9.6" transform="translate(12.9,403.10) rotate(-90)">2</text>
<text font-size="9.6" transform="translate(12.9,438.50) rotate(-90)">3</text>
<text font-size="9.6" transform="translate(12.9,473.90) rotate(-90)">4</text>
<text font-size="9.6" transform="translate(12.9,509.30) rotate(-90)">5</text>
<text font-size="9.6" transform="translate(12.9,544.70) rotate(-90)">6</text>
<text font-size="9.6" transform="translate(12.9,580.10) rotate(-90)">7</text>
<text font-size="9.6" transform="translate(12.9,615.50) rotate(-90)">8</text>
<text font-size="9.6" transform="translate(12.9,650.90) rotate(-90)">9</text>
<text font-size="9.6" transform="translate(12.9,686.30) rotate(-90)">10</text>
<text font-size="9.6" transform="translate(12.9,721.70) rotate(-90)">11</text>
<text font-size="9.6" transform="translate(12.9,757.10) rotate(-90)">12</text>
<text font-size="9.6" transform="translate(12.9,792.50) rotate(-90)">13</text>
<text font-size="9.6" transform="translate(12.9,827.90) rotate(-90)">14</text>
<text font-size="9.6" transform="translate(12.9,863.30) rotate(-90)">15</text>
<text font-size="9.6" transform="translate(12.9,898.70) rotate(-90)">16</text>
<text font-size="9.6" transform="translate(12.9,934.10) rotate(-90)">17</text>
<text font-size="9.6" transform="translate(12.9,969.50) rotate(-90)">18</text>
<text font-size="9.6" transform="translate(12.9,1004.90) rotate(-90)">19</text>
</g>
<path d="M867.8 220 H878.4 L873.1 226.2Z" fill="#4285f4"/>
</svg>
<div class="abs" style="left:34.5px;top:246px;width:29px;height:29px;border-radius:15px;background:#e3e8f2"></div>
<svg class="abs" style="left:42.50px;top:252.30px;" width="16" height="16" viewBox="0 0 24 24" fill="#444746"><path d="M3 9h2V7H3v2zm0 4h2v-2H3v2zm0 4h2v-2H3v2zm4-8h14V7H7v2zm0 4h14v-2H7v2zm0 4h14v-2H7v2z" /></svg>
<div class="abs" style="left:199px;top:242px;width:766px;height:775.8px;background:#fff;border:1px solid #c6c8ca;border-bottom:none"></div>
<div class="abs" style="left:536px;top:332.7px;width:7.5px;height:1px;background:#b4b6b8"></div>
<div class="abs" style="left:1184px;top:231.5px;width:7.5px;height:575px;border-radius:4px;background:#dadce0"></div>
<div class="abs" style="left:1100px;top:940px;width:95.3px;height:77.8px;overflow:hidden;border-bottom-right-radius:7.5px"><div class="abs" style="left:72px;top:33px;width:38px;height:38px;border-radius:19px;background:#fff;box-shadow:0 1px 3px rgba(60,64,67,.35),0 1px 4px 1px rgba(60,64,67,.15)"></div><svg class="abs" style="left:76.50px;top:43.00px;" width="18" height="18" viewBox="0 0 24 24" fill="#444746"><path d="M15.41 7.41L14 6l-6 6 6 6 1.41-1.41L10.830000000000002 12z" /></svg></div>
<!-- ===== menus ===== -->
<div class="abs popup" style="left:55.5px;top:162.6px;width:300.5px;height:584.9px"></div>
<div class="abs" style="left:55.5px;top:333.8px;width:300.5px;height:29.6px;background:#f0f1f2"></div>
<svg class="abs" style="left:67.50px;top:174.80px;" width="17" height="17" viewBox="0 0 24 24" fill="#444746"><path d="M19 3H5c-1.1 0-2 .9-2 2v14c0 1.1.9 2 2 2h14c1.1 0 2-.9 2-2V5c0-1.1-.9-2-2-2zm-5 14H7v-2h7v2zm3-4H7v-2h10v2zm0-4H7V7h10v2z" /></svg>
<span class="abs tx m" style="left:91.14px;top:172.80px;font-size:13.6px;line-height:20px;color:#202124;letter-spacing:-0.175px;">Nuevo</span>
<svg class="abs" style="left:334.2px;top:179.60px" width="6.6" height="7" viewBox="0 0 6.6 7"><path d="M0 0 L6.6 3.5 L0 7Z" fill="#85898e"/></svg>
<svg class="abs" style="left:67.90px;top:205.30px;" width="16.2" height="16.2" viewBox="0 0 24 24" fill="#444746"><path d="M9.17 6l2 2H20v10H4V6h5.17M10 4H4c-1.1 0-1.99.9-1.99 2L2 18c0 1.1.9 2 2 2h16c1.1 0 2-.9 2-2V8c0-1.1-.9-2-2-2h-8l-2-2z" /></svg>
<span class="abs tx m" style="left:92.20px;top:202.70px;font-size:13.6px;line-height:20px;color:#202124;letter-spacing:-0.187px;">Abrir</span>
<span class="abs tx" style="left:302.66px;top:202.70px;font-size:13.6px;line-height:20px;color:#80868b;letter-spacing:-0.209px;">Ctrl+O</span>
<svg class="abs" style="left:67.25px;top:234.75px;" width="17.5" height="17.5" viewBox="0 0 24 24" fill="#444746"><g fill="none" stroke="#444746" stroke-width="2" stroke-linejoin="round"><path d="M10 2.5 H15.5 L20 7 V16 Q20 18 18 18 H10 Q8 18 8 16 V4.5 Q8 2.5 10 2.5Z"/><path d="M4 8 V20.5 Q4 22 5.5 22 H16.5" stroke-linecap="butt"/></g><path d="M14.5 2.5 V8 H20 L14.5 2.5Z" /></svg>
<span class="abs tx m" style="left:91.14px;top:232.40px;font-size:13.6px;line-height:20px;color:#202124;letter-spacing:-0.112px;">Hacer una copia</span>
<div class="abs" style="left:55.5px;top:265.5px;width:300.5px;height:1px;background:#dadce0"></div>
<svg class="abs" style="left:67.00px;top:280.20px;" width="18" height="18" viewBox="0 0 24 24" fill="#444746"><g transform="translate(24,0) scale(-1,1)"><path d="M15 12c2.21 0 4-1.79 4-4s-1.79-4-4-4-4 1.79-4 4 1.79 4 4 4zm0-6c1.1 0 2 .9 2 2s-.9 2-2 2-2-.9-2-2 .9-2 2-2zm0 8c-2.67 0-8 1.34-8 4v2h16v-2c0-2.66-5.33-4-8-4zm-6 4c.22-.72 3.310000000000001-2 6-2 2.7 0 5.8 1.29 6 2H9z" /><path d="M6 13.5v-3h3v-2H6v-3H4v3H1v2h3v3z" /></g></svg>
<span class="abs tx m" style="left:91.56px;top:278.70px;font-size:13.6px;line-height:20px;color:#202124;letter-spacing:0.013px;">Compartir</span>
<svg class="abs" style="left:334.2px;top:285.50px" width="6.6" height="7" viewBox="0 0 6.6 7"><path d="M0 0 L6.6 3.5 L0 7Z" fill="#85898e"/></svg>
<svg class="abs" style="left:67.00px;top:310.20px;" width="18" height="18" viewBox="0 0 24 24" fill="#444746"><path d="M22 6c0-1.1-.9-2-2-2H4c-1.1 0-2 .9-2 2v12c0 1.1.9 2 2 2h16c1.1 0 2-.9 2-2V6zm-2 0l-8 5-8-5h16zm0 12H4V8l8 5 8-5v10z" /></svg>
<span class="abs tx m" style="left:91.56px;top:308.60px;font-size:13.6px;line-height:20px;color:#202124;letter-spacing:-0.008px;">Correo electrónico</span>
<svg class="abs" style="left:334.2px;top:315.40px" width="6.6" height="7" viewBox="0 0 6.6 7"><path d="M0 0 L6.6 3.5 L0 7Z" fill="#85898e"/></svg>
<svg class="abs" style="left:67.00px;top:340.00px;" width="18" height="18" viewBox="0 0 24 24" fill="#444746"><path d="M18 15v3H6v-3H4v3c0 1.1.9 2 2 2h12c1.1 0 2-.9 2-2v-3h-2zm-1-4l-1.41-1.41L13 12.17V4h-2v8.17L8.41 9.59 7 11l5 5 5-5z" /></svg>
<span class="abs tx m" style="left:91.14px;top:338.40px;font-size:13.6px;line-height:20px;color:#202124;letter-spacing:-0.138px;">Descargar</span>
<svg class="abs" style="left:334.2px;top:345.20px" width="6.6" height="7" viewBox="0 0 6.6 7"><path d="M0 0 L6.6 3.5 L0 7Z" fill="#202124"/></svg>
<div class="abs" style="left:55.5px;top:371.2px;width:300.5px;height:1px;background:#dadce0"></div>
<svg class="abs" style="left:67.00px;top:386.30px;" width="18" height="18" viewBox="0 0 24 24" fill="#444746"><g transform="translate(0.46,3.32) scale(0.78)"><path d="M14.06 9.02l.92.92L5.92 19H5v-.92l9.06-9.06M17.66 3c-.25 0-.51.1-.7.29l-1.83 1.83 3.75 3.75 1.83-1.83c.39-.39.39-1.02 0-1.41l-2.34-2.34c-.2-.2-.45-.29-.71-.29zm-3.6 3.19L3 17.25V21h3.75L17.81 9.94l-3.75-3.75z" /></g><path d="M13.2 17.6h7.3v2.1h-7.3z" /></svg>
<span class="abs tx m" style="left:91.56px;top:384.40px;font-size:13.6px;line-height:20px;color:#202124;letter-spacing:-0.115px;">Cambiar nombre</span>
<svg class="abs" style="left:67.00px;top:416.30px;" width="18" height="18" viewBox="0 0 24 24" fill="#444746"><path d="M20 6h-8l-2-2H4c-1.1 0-2 .9-2 2v12c0 1.1.9 2 2 2h16c1.1 0 2-.9 2-2V8c0-1.1-.9-2-2-2zm0 12H4V6h5.17l2 2H20v10z" /><path d="M8 12h5.2l-1.6-1.6L13 9l4 4-4 4-1.4-1.4 1.6-1.6H8z" /></svg>
<span class="abs tx m" style="left:91.14px;top:414.40px;font-size:13.6px;line-height:20px;color:#202124;letter-spacing:-0.039px;">Mover</span>
<svg class="abs" style="left:67.00px;top:446.20px;" width="18" height="18" viewBox="0 0 24 24" fill="#444746"><g fill="none" stroke="#444746" stroke-linejoin="round" stroke-linecap="round"><path d="M12.8 18.5 H5.4 Q3 18.5 4.2 16.4 L9.7 6.3 Q10.7 4.4 12.6 4.4 Q14.5 4.4 15.5 6.3 L18.3 11.4" stroke-width="2"/><path d="M8.7 15 L11.3 10.3 L13.9 15Z" stroke-width="1.7"/></g><path d="M18.6 14.6h2v2.6h2.6v2h-2.6v2.6h-2v-2.6h-2.6v-2h2.6z" /></svg>
<span class="abs tx m" style="left:92.20px;top:444.30px;font-size:13.6px;line-height:20px;color:#202124;letter-spacing:-0.099px;">Añadir acceso directo a Drive</span>
<svg class="abs" style="left:67.00px;top:476.10px;" width="18" height="18" viewBox="0 0 24 24" fill="#444746"><path d="M16 9v10H8V9h8m-1.5-6h-5l-1 1H5v2h14V4h-3.5l-1-1zM18 7H6v12c0 1.1.9 2 2 2h8c1.1 0 2-.9 2-2V7z" /><path d="M9.600000000000001 10.5h1.7v7H9.600000000000001zM12.7 10.5h1.7v7h-1.7z" /></svg>
<span class="abs tx m" style="left:91.14px;top:474.20px;font-size:13.6px;line-height:20px;color:#202124;letter-spacing:-0.151px;">Mover a la papelera</span>
<div class="abs" style="left:55.5px;top:506.7px;width:300.5px;height:1px;background:#dadce0"></div>
<svg class="abs" style="left:67.00px;top:521.90px;" width="18" height="18" viewBox="0 0 24 24" fill="#444746"><path d="M13 3c-4.97 0-9 4.03-9 9H1l3.89 3.89.07.14L9 12H6c0-3.87 3.13-7 7-7s7 3.13 7 7-3.13 7-7 7c-1.93 0-3.68-.79-4.94-2.06l-1.42 1.42C8.27 19.99 10.51 21 13 21c4.97 0 9-4.03 9-9s-4.03-9-9-9zm-1 5v5l4.28 2.54.72-1.21-3.5-2.08V8H12z" /></svg>
<span class="abs tx m" style="left:91.14px;top:520.00px;font-size:13.6px;line-height:20px;color:#202124;letter-spacing:0.023px;">Historial de versiones</span>
<svg class="abs" style="left:334.2px;top:526.80px" width="6.6" height="7" viewBox="0 0 6.6 7"><path d="M0 0 L6.6 3.5 L0 7Z" fill="#85898e"/></svg>
<svg class="abs" style="left:67.00px;top:551.80px;" width="18" height="18" viewBox="0 0 24 24" fill="#444746"><path d="M12 2C6.5 2 2 6.5 2 12s4.5 10 10 10 10-4.5 10-10S17.5 2 12 2zm0 18c-4.41 0-8-3.59-8-8s3.59-8 8-8 8 3.59 8 8-3.59 8-8 8zM7 15h10v1.8H7z" /><path d="M7.7 10.4 L10.4 13 L16.3 7.2" fill="none" stroke="#444746" stroke-width="1.9"/></svg>
<span class="abs tx m" style="left:92.20px;top:549.90px;font-size:13.6px;line-height:20px;color:#202124;letter-spacing:-0.017px;">Activar acceso sin conexión</span>
<div class="abs" style="left:55.5px;top:583.0px;width:300.5px;height:1px;background:#dadce0"></div>
<svg class="abs" style="left:67.00px;top:597.90px;" width="18" height="18" viewBox="0 0 24 24" fill="#444746"><path d="M11 7h2v2h-2zm0 4h2v6h-2zm1-9C6.48 2 2 6.48 2 12s4.48 10 10 10 10-4.48 10-10S17.52 2 12 2zm0 18c-4.41 0-8-3.59-8-8s3.59-8 8-8 8 3.59 8 8-3.59 8-8 8z" /></svg>
<span class="abs tx m" style="left:91.14px;top:596.00px;font-size:13.6px;line-height:20px;color:#202124;letter-spacing:0.008px;">Detalles</span>
<svg class="abs" style="left:68.10px;top:628.80px;" width="15.8" height="15.8" viewBox="0 0 24 24" fill="#444746"><path d="M12 1L3 5v6c0 5.55 3.84 10.74 9 12 5.16-1.26 9-6.45 9-12V5l-9-4zm0 2.18l7 3.12V11c0 4.52-2.98 8.69-7 9.93C7.98 19.69 5 15.52 5 11V6.3l7-3.12z" /><g fill="none" stroke="#444746" stroke-width="1.7"><circle cx="12" cy="11.5" r="2.2"/><path d="M14.2 9.3 V12.4 Q14.4 13.8 15.8 13.4 Q17 12.6 16.8 11 Q16.2 7 12 6.800000000000001 Q7.4 7 7.2 11.5 Q7.4 16 12 16.2 Q13.600000000000001 16.2 14.8 15.4"/></g></svg>
<span class="abs tx m" style="left:91.14px;top:625.80px;font-size:13.6px;line-height:20px;color:#202124;letter-spacing:0.047px;">Limitaciones de seguridad</span>
<svg class="abs" style="left:67.00px;top:657.70px;" width="18" height="18" viewBox="0 0 24 24" fill="#444746"><path d="M11.99 2C6.47 2 2 6.48 2 12s4.47 10 9.99 10C17.52 22 22 17.52 22 12S17.52 2 11.99 2zm6.93 6h-2.95c-.32-1.25-.78-2.45-1.38-3.56 1.84.63 3.37 1.91 4.33 3.56zM12 4.04c.83 1.2 1.48 2.53 1.91 3.96h-3.82c.43-1.43 1.08-2.76 1.91-3.96zM4.26 14C4.1 13.36 4 12.69 4 12s.1-1.36.26-2h3.38c-.08.66-.14 1.32-.14 2 0 .68.06 1.34.14 2H4.26zm.82 2h2.95c.32 1.25.78 2.45 1.38 3.56-1.84-.63-3.37-1.9-4.33-3.56zm2.95-8H5.08c.96-1.66 2.49-2.93 4.33-3.56C8.81 5.55 8.35 6.75 8.03 8zM12 19.96c-.83-1.2-1.48-2.53-1.91-3.96h3.82c-.43 1.43-1.08 2.76-1.91 3.96zM14.34 14H9.66c-.09-.66-.16-1.32-.16-2 0-.68.07-1.35.16-2h4.68c.09.65.16 1.32.16 2 0 .68-.07 1.34-.16 2zm.25 5.56c.6-1.11 1.06-2.31 1.38-3.56h2.95c-.96 1.65-2.49 2.93-4.33 3.56zM16.36 14c.08-.66.14-1.32.14-2 0-.68-.06-1.34-.14-2h3.38c.16.64.26 1.31.26 2s-.1 1.36-.26 2h-3.38z" /></svg>
<span class="abs tx m" style="left:91.14px;top:655.80px;font-size:13.6px;line-height:20px;color:#202124;letter-spacing:0.011px;">Idioma</span>
<svg class="abs" style="left:334.2px;top:662.60px" width="6.6" height="7" viewBox="0 0 6.6 7"><path d="M0 0 L6.6 3.5 L0 7Z" fill="#85898e"/></svg>
<svg class="abs" style="left:67.75px;top:688.65px;" width="16.5" height="16.5" viewBox="0 0 24 24" fill="#444746"><path d="M8 16h8v2H8zm0-4h8v2H8zm6-10H6c-1.1 0-2 .9-2 2v16c0 1.1.89 2 1.99 2H18c1.1 0 2-.9 2-2V8l-6-6zm4 18H6V4h7v5h5v11z" /></svg>
<span class="abs tx m" style="left:91.56px;top:685.40px;font-size:13.6px;line-height:20px;color:#202124;letter-spacing:-0.072px;">Configuración de página</span>
<svg class="abs" style="left:67.00px;top:717.20px;" width="18" height="18" viewBox="0 0 24 24" fill="#444746"><path d="M19 8H5c-1.66 0-3 1.34-3 3v6h4v4h12v-4h4v-6c0-1.66-1.34-3-3-3zm-3 11H8v-5h8v5zm3-7c-.55 0-1-.45-1-1s.45-1 1-1 1 .45 1 1-.45 1-1 1zm-1-9H6v4h12V3z" /></svg>
<span class="abs tx m" style="left:91.14px;top:715.30px;font-size:13.6px;line-height:20px;color:#202124;letter-spacing:0.261px;">Imprimir</span>
<span class="abs tx" style="left:303.66px;top:715.30px;font-size:13.6px;line-height:20px;color:#80868b;letter-spacing:-0.111px;">Ctrl+P</span>
<div class="abs popup" style="left:356.5px;top:334.2px;width:244.2px;height:252.4px"></div>
<div class="abs" style="left:356.5px;top:340.8px;width:244px;height:29px;background:#f0f1f2"></div>
<span class="abs tx m" style="left:370.74px;top:344.60px;font-size:13.6px;line-height:20px;color:#202124;letter-spacing:0.130px;">Microsoft Word (.docx)</span>
<span class="abs tx m" style="left:370.74px;top:374.60px;font-size:13.6px;line-height:20px;color:#202124;letter-spacing:-0.047px;">Formato OpenDocument (.odt)</span>
<span class="abs tx m" style="left:370.74px;top:404.60px;font-size:13.6px;line-height:20px;color:#202124;letter-spacing:0.078px;">Formato de texto enriquecido (.rtf)</span>
<span class="abs tx m" style="left:370.74px;top:434.60px;font-size:13.6px;line-height:20px;color:#202124;letter-spacing:-0.057px;">Documento PDF (.pdf)</span>
<span class="abs tx m" style="left:371.59px;top:464.60px;font-size:13.6px;line-height:20px;color:#202124;letter-spacing:0.169px;">Texto sin formato (.txt)</span>
<span class="abs tx m" style="left:370.74px;top:494.60px;font-size:13.6px;line-height:20px;color:#202124;letter-spacing:0.036px;">Página web (.html, comprimido)</span>
<span class="abs tx m" style="left:370.74px;top:524.60px;font-size:13.6px;line-height:20px;color:#202124;letter-spacing:-0.173px;">Publicación EPUB (.epub)</span>
<span class="abs tx m" style="left:370.74px;top:554.60px;font-size:13.6px;line-height:20px;color:#202124;letter-spacing:0.133px;">Markdown (.md)</span>
<svg class="abs" style="left:530px;top:335px" width="195" height="30" viewBox="530 335 195 30"><path d="M716.6 349 L553 350.2" stroke="#db2027" stroke-width="3" stroke-linecap="butt" fill="none"/><path d="M537.4 350.5 L554.8 341.9 L554.8 359.3Z" fill="#db2027"/></svg>
</body>
</html>
